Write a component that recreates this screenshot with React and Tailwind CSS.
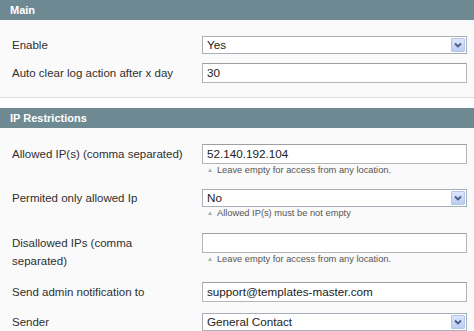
import React from "react";

const font = { fontFamily: '"Liberation Sans", Arial, sans-serif' };

function Arrow() {
  return (
    <span className="absolute right-[1px] top-[1px] bottom-[1px] w-[14px] border border-[#b3c6ea] bg-gradient-to-b from-[#dbe6fb] to-[#bccdf2] flex items-center justify-center rounded-[1px]">
      <svg width="8" height="6" viewBox="0 0 8 6">
        <path d="M1 1.5 L4 4.5 L7 1.5" fill="none" stroke="#4a5d82" strokeWidth="1.8" />
      </svg>
    </span>
  );
}

function Select({ value }) {
  return (
    <div className="relative h-[18px] w-[265px] border border-[#a7b0b8] bg-white pl-[4px] text-[11.7px] leading-[16px] text-[#222]">
      {value}
      <Arrow />
    </div>
  );
}

function Input({ value }) {
  return (
    <div className="h-[20px] w-[265px] border border-[#b5b5b5] border-t-[#a0a0a0] bg-white pl-[4px] text-[11.7px] leading-[18px] text-[#222]">
      {value}
    </div>
  );
}

function Hint({ children }) {
  return (
    <div className="flex h-[13px] items-center whitespace-nowrap pl-[5px] text-[9.3px] leading-[13px] text-[#555]">
      <span className="mr-[4px] text-[6px] text-[#9aa]">▲</span>
      {children}
    </div>
  );
}

function Row({ label, children, mt, labelPt = 0 }) {
  return (
    <div className="flex" style={{ marginTop: mt }}>
      <div
        className="w-[202px] shrink-0 whitespace-nowrap pl-[12px] text-[11.5px] leading-[18px] text-[#2f2f2f]"
        style={{ paddingTop: labelPt }}
      >
        {label}
      </div>
      <div className="flex flex-col">{children}</div>
    </div>
  );
}

function Header({ children }) {
  return (
    <div className="h-[20px] bg-[#6f8992] pl-[10px] text-[11px] font-bold leading-[20px] text-white">
      {children}
    </div>
  );
}

export default function App() {
  const hint = "Leave empty for access from any location.";
  return (
    <div className="h-[331px] w-[474px] overflow-hidden bg-white" style={font}>
      <Header>Main</Header>
      <div className="border-b border-[#dcdcdc] bg-[#fafafa] pb-[14px] pt-[16px]">
        <Row label="Enable" mt={0}>
          <Select value="Yes" />
        </Row>
        <Row label="Auto clear log action after x day" mt={9} labelPt={1}>
          <Input value="30" />
        </Row>
      </div>
      <div className="mt-[10px]">
        <Header>IP Restrictions</Header>
        <div className="bg-[#fafafa] pt-[16px] pb-[10px]">
          <Row label="Allowed IP(s) (comma separated)" mt={0} labelPt={1}>
            <Input value="52.140.192.104" />
            <Hint>{hint}</Hint>
          </Row>
          <Row label="Permited only allowed Ip" mt={12}>
            <Select value="No" />
            <Hint>Allowed IP(s) must be not empty</Hint>
          </Row>
          <Row label={<>Disallowed IPs (comma<br />separated)</>} mt={13} labelPt={1}>
            <Input value="" />
            <Hint>{hint}</Hint>
          </Row>
          <Row label="Send admin notification to" mt={12} labelPt={1}>
            <Input value="support@templates-master.com" />
          </Row>
          <Row label="Sender" mt={11}>
            <Select value="General Contact" />
          </Row>
        </div>
      </div>
    </div>
  );
}
